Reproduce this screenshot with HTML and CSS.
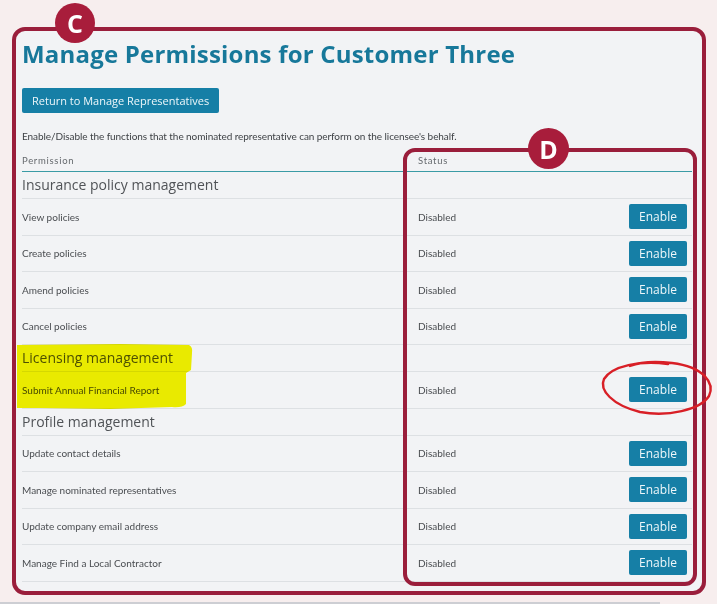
FILE: index.html
```html
<!DOCTYPE html>
<html lang="en">
<head>
<meta charset="utf-8">
<title>Manage Permissions for Customer Three</title>
<link rel="stylesheet" href="styles.css">
</head>
<body>
<div class="page">
  <section class="panel">
    <h1 class="title">Manage Permissions for Customer Three</h1>
    <button class="btn btn-return">Return to Manage Representatives</button>
    <p class="intro">Enable/Disable the functions that the nominated representative can perform on the licensee's behalf.</p>
    <div class="table">
      <div class="thead"><span>Permission</span><span>Status</span></div>

      <div class="group">Insurance policy management</div>
      <div class="row"><span class="perm">View policies</span><span class="status">Disabled</span><button class="btn btn-enable">Enable</button></div>
      <div class="row"><span class="perm">Create policies</span><span class="status">Disabled</span><button class="btn btn-enable">Enable</button></div>
      <div class="row"><span class="perm">Amend policies</span><span class="status">Disabled</span><button class="btn btn-enable">Enable</button></div>
      <div class="row"><span class="perm">Cancel policies</span><span class="status">Disabled</span><button class="btn btn-enable">Enable</button></div>

      <div class="group">Licensing management</div>
      <div class="row"><span class="perm">Submit Annual Financial Report</span><span class="status">Disabled</span><button class="btn btn-enable">Enable</button></div>

      <div class="group">Profile management</div>
      <div class="row"><span class="perm">Update contact details</span><span class="status">Disabled</span><button class="btn btn-enable">Enable</button></div>
      <div class="row"><span class="perm">Manage nominated representatives</span><span class="status">Disabled</span><button class="btn btn-enable">Enable</button></div>
      <div class="row"><span class="perm">Update company email address</span><span class="status">Disabled</span><button class="btn btn-enable">Enable</button></div>
      <div class="row"><span class="perm">Manage Find a Local Contractor</span><span class="status">Disabled</span><button class="btn btn-enable">Enable</button></div>
    </div>
  </section>
  <div class="scrollbar"></div>

  <svg class="highlight" width="717" height="604" viewBox="0 0 717 604" aria-hidden="true">
    <path d="M17,345 L120,344 L189,345 Q193,347 192,353 L191,370 L186,373 L186,404 Q182,408 172,407 L110,409 L40,408 L17,408 Z" fill="#f6f600"/>
  </svg>
  <div class="frame-d"></div>
  <div class="badge badge-c">C</div>
  <div class="badge badge-d">D</div>
  <svg class="circle-mark" width="717" height="604" viewBox="0 0 717 604" aria-hidden="true">
    <path d="M668,364 C640,360 612,366 604,379 C599,390 612,405 640,412 C668,417 700,410 709,396 C715,383 704,367 672,363 C655,361 640,362 630,366" fill="none" stroke="#d81f26" stroke-width="2.4" stroke-linecap="round"/>
  </svg>
</div>
</body>
</html>
```
FILE: styles.css
```css
* { box-sizing: border-box; }

html, body {
  margin: 0;
  padding: 0;
  background: #f7eeee;
}

.page {
  position: relative;
  width: 717px;
  height: 604px;
  overflow: hidden;
  background: #f7eeee;
}

.panel {
  margin: 27px 0 0 12px;
  width: 694px;
  height: 568px;
  border: 4px solid #9a1e3b;
  border-radius: 13px;
  padding: 13px 10px 0 6px;
  background: #f2f3f5;
}

.title {
  margin: 0;
  font: 700 24px/20px "Open Sans", "Liberation Sans", sans-serif;
  color: #17789a;
  letter-spacing: 0.2px;
}

.btn {
  border: none;
  background: #167fa6;
  color: #eef7fa;
  cursor: pointer;
}

.btn-return {
  display: block;
  margin-top: 24px;
  height: 25px;
  padding: 0 10px;
  border-radius: 2px;
  font: 400 11px/25px "Open Sans", "Liberation Sans", sans-serif;
}

.intro {
  margin: 16px 0 0;
  font: 400 10px/14px Lato, "Liberation Sans", sans-serif;
  letter-spacing: -0.07px;
  color: #3f4246;
}

.thead {
  display: grid;
  grid-template-columns: 396px 1fr;
  align-items: end;
  height: 29px;
  padding-bottom: 3px;
  border-bottom: 1.5px solid #3a9ba5;
  font: 400 9.5px/14px Lato, "Liberation Sans", sans-serif;
  letter-spacing: 0.7px;
  color: #666a6e;
}

.group {
  display: flex;
  align-items: center;
  height: 27px;
  border-bottom: 1px solid #dde0e3;
  font: 400 14px/18px "Open Sans", "Liberation Sans", sans-serif;
  color: #505357;
}

.row {
  display: grid;
  grid-template-columns: 396px 1fr auto;
  align-items: center;
  height: 36.5px;
  border-bottom: 1px solid #dde0e3;
  font: 400 10px/14px Lato, "Liberation Sans", sans-serif;
  color: #4a4d51;
}

.btn-enable {
  width: 58px;
  height: 25px;
  margin-right: 5px;
  border-radius: 2px;
  padding: 0;
  font: 400 12px/25px "Open Sans", "Liberation Sans", sans-serif;
}

.scrollbar {
  margin-top: 7px;
  width: 660px;
  height: 2px;
  background: #cdced3;
}

.highlight {
  position: absolute;
  left: 0;
  top: 0;
  mix-blend-mode: multiply;
  pointer-events: none;
}

.circle-mark {
  position: absolute;
  left: 0;
  top: 0;
  pointer-events: none;
}

.frame-d {
  position: absolute;
  left: 403px;
  top: 148px;
  width: 294px;
  height: 438px;
  border: 4.5px solid #9a1e3b;
  border-radius: 12px;
  pointer-events: none;
}

.badge {
  position: absolute;
  display: flex;
  align-items: center;
  justify-content: center;
  border-radius: 50%;
  background: #a81d3b;
  color: #ffffff;
  font: 700 25px/20px "Open Sans", "Liberation Sans", sans-serif;
}

.badge-c {
  left: 55px;
  top: 3px;
  width: 40px;
  height: 40px;
}

.badge-d {
  left: 528px;
  top: 128px;
  width: 41px;
  height: 41px;
}
```
